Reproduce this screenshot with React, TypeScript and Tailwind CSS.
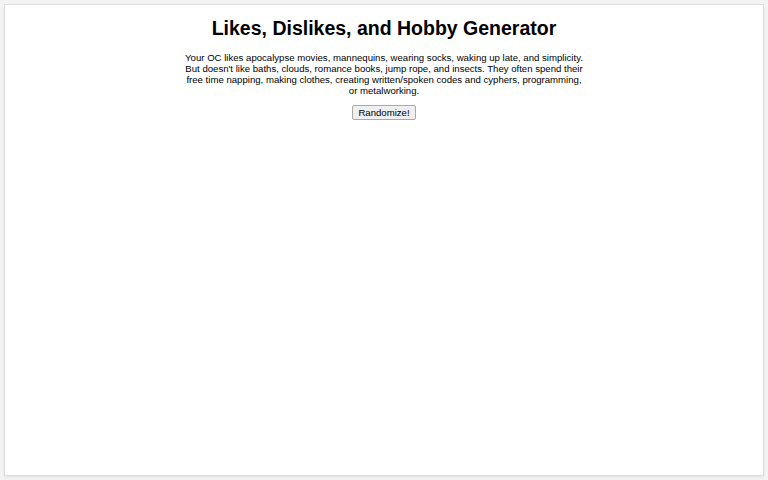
export default function App() {
  return (
    <div className="h-[480px] w-[768px] bg-[#f3f3f3] p-[4px] font-['Liberation_Sans',Arial,sans-serif] text-black">
      <div className="flex h-full flex-col items-center border border-[#dcdcdc] bg-white shadow-[0_1px_2px_rgba(0,0,0,0.08)]">
        <h1 className="mt-[12px] text-[19.5px] font-bold leading-[22px]">Likes, Dislikes, and Hobby Generator</h1>
        <p className="mt-[13px] w-[400px] text-center text-[9.6px] leading-[11px]">
          Your OC likes apocalypse movies, mannequins, wearing socks, waking up late, and simplicity. But doesn't like baths, clouds, romance books, jump rope, and insects. They often spend their free time napping, making clothes, creating written/spoken codes and cyphers, programming, or metalworking.
        </p>
        <button className="mt-[9px] rounded-[2px] border border-[#a9a9a9] bg-[#efefef] px-[5px] text-[9.6px] leading-[13px]">
          Randomize!
        </button>
      </div>
    </div>
  );
}
